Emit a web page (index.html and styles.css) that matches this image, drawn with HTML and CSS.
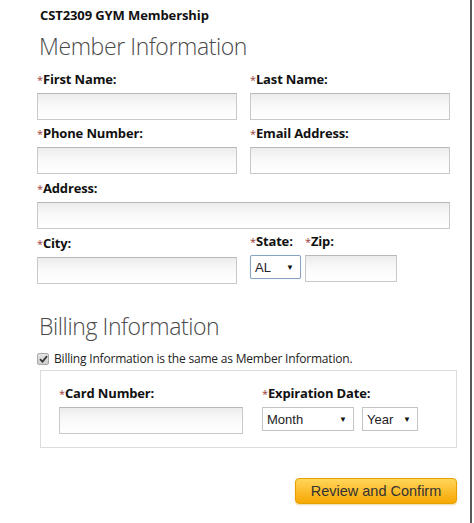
FILE: index.html
```html
<!DOCTYPE html>
<html>
<head>
<meta charset="utf-8">
<link rel="stylesheet" href="styles.css">
</head>
<body>
<div class="page">
  <div class="site-title">CST2309 GYM Membership</div>
  <h2 class="section-title">Member Information</h2>
  <div class="grid">
    <div class="field">
      <label><span class="req">*</span>First Name:</label>
      <input class="text" type="text">
    </div>
    <div class="field">
      <label><span class="req">*</span>Last Name:</label>
      <input class="text" type="text">
    </div>
    <div class="field">
      <label><span class="req">*</span>Phone Number:</label>
      <input class="text" type="text">
    </div>
    <div class="field">
      <label><span class="req">*</span>Email Address:</label>
      <input class="text" type="text">
    </div>
    <div class="field wide">
      <label><span class="req">*</span>Address:</label>
      <input class="text" type="text">
    </div>
    <div class="field city">
      <label><span class="req">*</span>City:</label>
      <input class="text" type="text">
    </div>
    <div class="state-zip">
      <div class="field">
        <label><span class="req">*</span>State:</label>
        <div class="select state-select"><span>AL</span><span class="arrow">▼</span></div>
      </div>
      <div class="field">
        <label><span class="req">*</span>Zip:</label>
        <input class="text zip" type="text">
      </div>
    </div>
  </div>

  <h2 class="section-title billing">Billing Information</h2>
  <div class="same">
    <span class="check"><svg width="9" height="8" viewBox="0 0 9 8"><path d="M1 4.2 L3.5 6.6 L8 1.2" fill="none" stroke="#3a3a3a" stroke-width="1.8"/></svg></span>
    <span>Billing Information is the same as Member Information.</span>
  </div>
  <div class="billing-box">
    <div class="field card">
      <label><span class="req">*</span>Card Number:</label>
      <input class="text" type="text">
    </div>
    <div class="field">
      <label><span class="req">*</span>Expiration Date:</label>
      <div class="exp">
        <div class="select month"><span>Month</span><span class="arrow">▼</span></div>
        <div class="select year"><span>Year</span><span class="arrow">▼</span></div>
      </div>
    </div>
  </div>
  <div class="actions">
    <button class="confirm" type="button">Review and Confirm</button>
  </div>
</div>
</body>
</html>
```

FILE: styles.css
```css
html, body {
  margin: 0;
  padding: 0;
  background: #fff;
}
.page {
  width: 472px;
  height: 523px;
  border-right: 2px solid #5a5a5a;
  padding-left: 37px;
  box-sizing: border-box;
  font-family: "Open Sans", "Liberation Sans", sans-serif;
  color: #111;
}
.site-title {
  font-weight: 700;
  font-size: 13px;
  line-height: 16px;
  padding-top: 7px;
  padding-left: 3px;
  letter-spacing: -0.1px;
}
.section-title {
  margin: 8px 0 0 2px;
  font-weight: 300;
  font-size: 23px;
  line-height: 30px;
  color: #4a4a4a;
  letter-spacing: -0.4px;
}
.grid {
  margin-top: 10px;
  display: grid;
  grid-template-columns: 200px 200px;
  column-gap: 13px;
  row-gap: 5px;
}
.field {
  display: flex;
  flex-direction: column;
  gap: 5px;
}
.field label {
  font-weight: 700;
  font-size: 13px;
  line-height: 17px;
  color: #111;
  letter-spacing: -0.15px;
}
.req {
  color: #9b3b3b;
  font-weight: 400;
  font-size: 11px;
}
.text {
  height: 27px;
  box-sizing: border-box;
  margin: 0;
  border: 1px solid #c9c9c9;
  border-top-color: #b8b8b8;
  background: linear-gradient(#ececec, #f9f9f9 45%, #fff);
  padding: 0 4px;
}
.wide {
  grid-column: 1 / 3;
  margin-top: 1px;
}
.wide .text {
  width: 413px;
}
.city {
  margin-top: 1px;
}
.state-zip {
  display: flex;
  gap: 4px;
  margin-top: -1px;
}
.select {
  box-sizing: border-box;
  height: 24px;
  border: 1px solid #c4c4c4;
  background: #fff;
  font-family: "Liberation Sans", Arial, sans-serif;
  font-size: 13px;
  color: #222;
  display: flex;
  align-items: center;
  justify-content: space-between;
  padding: 0 6px 0 4px;
}
.arrow {
  font-size: 8px;
  color: #111;
}
.state-select {
  width: 51px;
  border: 1px solid #8aa4c4;
  border-radius: 2px;
  box-shadow: 0 0 1px #aac0d8;
}
.zip {
  width: 92px;
}
.billing {
  margin-top: 27px;
}
.same {
  margin-top: 10px;
  display: flex;
  align-items: center;
  gap: 5px;
  font-size: 12px;
  line-height: 15px;
  color: #222;
  letter-spacing: -0.2px;
}
.check {
  width: 12px;
  height: 12px;
  box-sizing: border-box;
  border: 1px solid #a8a8a8;
  border-radius: 2px;
  background: linear-gradient(#e4e4e4, #cfcfcf);
  display: flex;
  align-items: center;
  justify-content: center;
}
.billing-box {
  margin: 4px 0 0 3px;
  width: 417px;
  height: 78px;
  box-sizing: border-box;
  border: 1px solid #dcdcdc;
  padding: 14px 0 0 18px;
  display: flex;
  gap: 19px;
}
.card .text {
  width: 184px;
}
.exp {
  display: flex;
  gap: 8px;
}
.month {
  width: 92px;
  height: 24px;
}
.year {
  width: 56px;
  height: 24px;
}
.actions {
  display: flex;
  justify-content: flex-end;
  padding-right: 13px;
  margin-top: 30px;
}
.confirm {
  width: 162px;
  height: 26px;
  border: 1px solid #e8a200;
  border-radius: 4px;
  background: linear-gradient(#ffd65a, #fbbb2a 55%, #f5a800);
  box-shadow: 0 1px 2px rgba(200, 140, 0, 0.35);
  font-family: "Liberation Sans", Arial, sans-serif;
  font-size: 14.5px;
  color: #333;
  padding: 0;
}
```
